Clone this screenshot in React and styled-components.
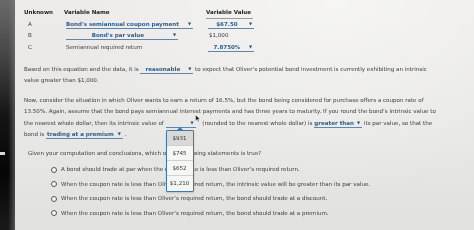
import React from 'react'
import styled, { createGlobalStyle } from 'styled-components'

const GlobalStyle = createGlobalStyle`
    html, body {
        margin: 0;
        padding: 0;
        background: #e6e6e4;
    }
    body {
        font-family: "DejaVu Sans", Verdana, sans-serif;
    }
`

const rows = [
    { key: 'A', name: "Bond's semiannual coupon payment", nameWidth: 127, left: true, value: '$67.50', valueDrop: true },
    { key: 'B', name: "Bond's par value", nameWidth: 112, value: '$1,000' },
    { key: 'C', name: 'Semiannual required return', plain: true, value: '7.8750%', valueDrop: true },
]

const options = [
    'A bond should trade at par when the coupon rate is less than Oliver\u2019s required return.',
    'When the coupon rate is less than Oliver\u2019s required return, the intrinsic value will be greater than its par value.',
    'When the coupon rate is less than Oliver\u2019s required return, the bond should trade at a discount.',
    'When the coupon rate is less than Oliver\u2019s required return, the bond should trade at a premium.',
]

const menuItems = ['$931', '$745', '$652', '$1,210']

function Drop({ children, width, align }) {
    return (
        <DropBox $width={width} $align={align}>
            <DropText>{children}</DropText>
            <Caret>&#9660;</Caret>
        </DropBox>
    )
}

function App() {
    return (
        <Page>
            <GlobalStyle />
            <Bezel />
            <Screen>
                <Table>
                    <HeadCell>Unknown</HeadCell>
                    <HeadCell>Variable Name</HeadCell>
                    <HeadCell $rule>Variable Value</HeadCell>
                    {rows.map(r => (
                        <React.Fragment key={r.key}>
                            <KeyCell>{r.key}</KeyCell>
                            <Cell>
                                {r.plain
                                    ? r.name
                                    : <Drop width={r.nameWidth} align={r.left ? 'left' : 'center'}>{r.name}</Drop>}
                            </Cell>
                            <Cell>
                                {r.valueDrop
                                    ? <Drop width={46} align="center">{r.value}</Drop>
                                    : <ValuePlain>{r.value}</ValuePlain>}
                            </Cell>
                        </React.Fragment>
                    ))}
                </Table>

                <Para $top={11}>
                    Based on this equation and the data, it is <Drop width={53}>reasonable</Drop> to expect that Oliver’s potential bond investment is currently exhibiting an intrinsic
                    <br />value greater than $1,000.
                </Para>

                <Para $top={9} $lh={11.3}>
                    Now, consider the situation in which Oliver wants to earn a return of 16.5%, but the bond being considered for purchase offers a coupon rate of
                    <br />13.50%. Again, assume that the bond pays semiannual interest payments and has three years to maturity. If you round the bond’s intrinsic value to
                    <br />the nearest whole dollar, then its intrinsic value of{' '}
                    <MenuAnchor>
                        <Drop width={30}>{''}</Drop>
                        <Pointer viewBox="0 0 10 14">
                            <path d="M1 1 L1 11 L3.6 8.6 L5.4 12.6 L6.9 11.9 L5.2 8.1 L8.6 8.1 Z" fill="#111" stroke="#fff" strokeWidth="0.8" />
                        </Pointer>
                        <Menu>
                            {menuItems.map((m, i) => (
                                <MenuItem key={m} $active={i === 0}>{m}</MenuItem>
                            ))}
                        </Menu>
                    </MenuAnchor>
                    {' '}(rounded to the nearest whole dollar) is <Drop width={48}>greater than</Drop> its par value, so that the
                    <br />bond is <Drop width={77}>trading at a premium</Drop> .
                </Para>

                <Question>
                    Given your computation and conclusions, which of the following statements is true?
                </Question>

                <Options>
                    {options.map(o => (
                        <Option key={o}>
                            <Radio />
                            <span>{o}</span>
                        </Option>
                    ))}
                </Options>
            </Screen>
        </Page>
    )
}

export default App

const Page = styled.div`
    display: flex;
    width: 474px;
    height: 230px;
    overflow: hidden;
    filter: blur(0.35px);
`
const Bezel = styled.div`
    position: relative;
    width: 15px;
    flex-shrink: 0;
    background:
        linear-gradient(to right, rgba(0,0,0,0) 55%, rgba(120,120,120,0.6) 100%),
        linear-gradient(to bottom, #6a6a6a 0%, #444 25%, #151515 50%, #050505 75%, #1a1a1a 100%);

    &::after {
        content: '';
        position: absolute;
        left: 0;
        top: 152px;
        width: 5px;
        height: 3px;
        background: #d8d8d8;
    }
`
const Screen = styled.div`
    flex: 1;
    padding: 7px 0 0 9px;
    color: #3a3a3a;
    font-size: 5.55px;
    line-height: 11px;
    background:
        radial-gradient(ellipse at 70% 0%, rgba(255,255,255,0.5), rgba(255,255,255,0) 60%),
        linear-gradient(to bottom, #ecebe9 0%, #e7e7e5 60%, #e1e1df 100%);
`
const Table = styled.div`
    display: grid;
    grid-template-columns: 40px 142px 60px;
    grid-auto-rows: 11.5px;
    align-items: center;
`
const HeadCell = styled.div`
    font-weight: bold;
    color: #1e1e1e;
    align-self: stretch;
    display: flex;
    align-items: center;
    border-bottom: 1px solid ${p => (p.$rule ? '#9a9a9a' : 'transparent')};
    width: ${p => (p.$rule ? '47px' : 'auto')};
`
const KeyCell = styled.div`
    padding-left: 4px;
`
const Cell = styled.div`
    display: flex;
    align-items: center;
    padding-left: 2px;
`
const ValuePlain = styled.span`
    padding-left: 1px;
`
const DropBox = styled.span`
    display: inline-flex;
    align-items: center;
    width: ${p => p.$width}px;
    height: 8px;
    line-height: 8px;
    vertical-align: middle;
    border-bottom: 1px solid #5f86ad;
    color: #2d5d8e;
    font-weight: bold;

    span:first-child {
        text-align: ${p => p.$align || 'center'};
    }
`
const DropText = styled.span`
    flex: 1;
    white-space: nowrap;
    overflow: hidden;
`
const Caret = styled.span`
    font-size: 4px;
    color: #2d4f74;
    padding: 0 2px 0 3px;
`
const Para = styled.p`
    margin: ${p => p.$top}px 0 0;
    line-height: ${p => p.$lh || 11}px;
    white-space: nowrap;
`
const MenuAnchor = styled.span`
    position: relative;
    display: inline-block;
    margin-right: 5px;
`
const Pointer = styled.svg`
    position: absolute;
    left: 29px;
    top: -4px;
    width: 6px;
    height: 9px;
    z-index: 3;
`
const Menu = styled.div`
    position: absolute;
    left: 0;
    top: 12px;
    width: 26px;
    background: #f6f6f4;
    border: 1.5px solid #3d78b3;
    border-radius: 1px;
    z-index: 2;
    box-shadow: 0 1px 2px rgba(0,0,0,0.15);

    &::before {
        content: '';
        position: absolute;
        left: 10px;
        top: -4px;
        border-left: 3px solid transparent;
        border-right: 3px solid transparent;
        border-bottom: 3px solid #3d78b3;
    }
`
const MenuItem = styled.div`
    height: 14.3px;
    line-height: 14.3px;
    text-align: center;
    color: #333;
    background: ${p => (p.$active ? '#d9d9d7' : 'transparent')};
    border-bottom: 1px solid #d0d0ce;

    &:last-child {
        border-bottom: none;
    }
`
const Question = styled.p`
    margin: 8px 0 0 4px;
    white-space: nowrap;
`
const Options = styled.div`
    display: flex;
    flex-direction: column;
    gap: 3.5px;
    margin: 5px 0 0 27px;
`
const Option = styled.div`
    display: flex;
    align-items: center;
    gap: 4px;
    height: 11px;
    white-space: nowrap;
`
const Radio = styled.span`
    width: 4px;
    height: 4px;
    border: 1px solid #555;
    border-radius: 50%;
    background: #fafafa;
    flex-shrink: 0;
`
